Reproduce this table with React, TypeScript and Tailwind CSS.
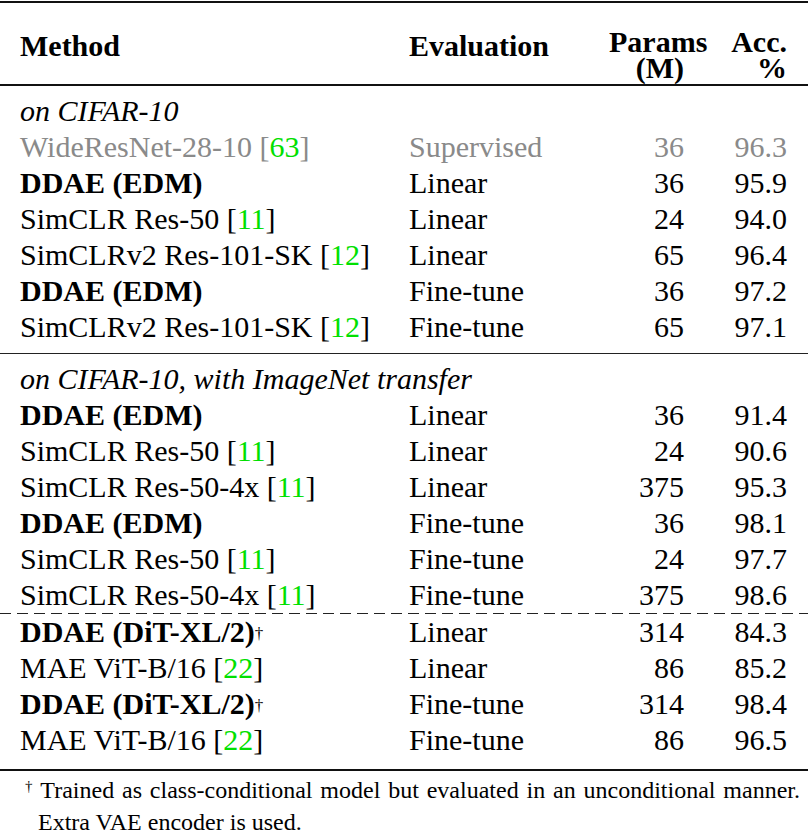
import React from "react";

type Row = {
  method: React.ReactNode;
  evaluation: string;
  params: string;
  acc: string;
  gray?: boolean;
  dashedAbove?: boolean;
};

const Ref = ({ n }: { n: string }) => (
  <>
    [<span className="text-[#00e000]">{n}</span>]
  </>
);

const Bold = ({ children }: { children: React.ReactNode }) => (
  <span className="font-bold">{children}</span>
);

const Dagger = () => (
  <sup className="relative -top-[3px] text-[17px] font-normal leading-none">†</sup>
);

const SECTION_A: Row[] = [
  { method: <>WideResNet-28-10 <Ref n="63" /></>, evaluation: "Supervised", params: "36", acc: "96.3", gray: true },
  { method: <Bold>DDAE (EDM)</Bold>, evaluation: "Linear", params: "36", acc: "95.9" },
  { method: <>SimCLR Res-50 <Ref n="11" /></>, evaluation: "Linear", params: "24", acc: "94.0" },
  { method: <>SimCLRv2 Res-101-SK <Ref n="12" /></>, evaluation: "Linear", params: "65", acc: "96.4" },
  { method: <Bold>DDAE (EDM)</Bold>, evaluation: "Fine-tune", params: "36", acc: "97.2" },
  { method: <>SimCLRv2 Res-101-SK <Ref n="12" /></>, evaluation: "Fine-tune", params: "65", acc: "97.1" },
];

const SECTION_B: Row[] = [
  { method: <Bold>DDAE (EDM)</Bold>, evaluation: "Linear", params: "36", acc: "91.4" },
  { method: <>SimCLR Res-50 <Ref n="11" /></>, evaluation: "Linear", params: "24", acc: "90.6" },
  { method: <>SimCLR Res-50-4x <Ref n="11" /></>, evaluation: "Linear", params: "375", acc: "95.3" },
  { method: <Bold>DDAE (EDM)</Bold>, evaluation: "Fine-tune", params: "36", acc: "98.1" },
  { method: <>SimCLR Res-50 <Ref n="11" /></>, evaluation: "Fine-tune", params: "24", acc: "97.7" },
  { method: <>SimCLR Res-50-4x <Ref n="11" /></>, evaluation: "Fine-tune", params: "375", acc: "98.6" },
  { method: <><Bold>DDAE (DiT-XL/2)</Bold><Dagger /></>, evaluation: "Linear", params: "314", acc: "84.3", dashedAbove: true },
  { method: <>MAE ViT-B/16 <Ref n="22" /></>, evaluation: "Linear", params: "86", acc: "85.2" },
  { method: <><Bold>DDAE (DiT-XL/2)</Bold><Dagger /></>, evaluation: "Fine-tune", params: "314", acc: "98.4" },
  { method: <>MAE ViT-B/16 <Ref n="22" /></>, evaluation: "Fine-tune", params: "86", acc: "96.5" },
];

const COLS = "grid grid-cols-[409px_200px_75px_103px]";

function TableRow({ row }: { row: Row }) {
  return (
    <>
      {row.dashedAbove && (
        <div className="h-px w-full bg-[repeating-linear-gradient(to_right,#222_0_11px,transparent_11px_17px)]" />
      )}
      <div className={`${COLS} h-[36px] items-center ${row.gray ? "text-[#8a8a8a]" : "text-black"}`}>
        <div className="pl-[20px] whitespace-nowrap">{row.method}</div>
        <div>{row.evaluation}</div>
        <div className="text-right">{row.params}</div>
        <div className="text-right">{row.acc}</div>
      </div>
    </>
  );
}

function SectionTitle({ children }: { children: React.ReactNode }) {
  return (
    <div className="h-[36px] flex items-center pl-[20px] italic whitespace-nowrap">{children}</div>
  );
}

export default function App() {
  return (
    <div className="w-[811px] h-[834px] bg-white overflow-hidden [font-family:Liberation_Serif,Times_New_Roman,serif] text-[30px] leading-[36px] text-black">
      <div className="w-[808px] pt-px">
        <div className="h-[2px] bg-[#111]" />

        <div className={`${COLS} h-[81px] font-bold`}>
          <div className="pl-[20px] pt-[25px]">Method</div>
          <div className="pt-[25px]">Evaluation</div>
          <div className="text-right pt-[26px] leading-[26px] whitespace-nowrap">
            Params
            <br />
            (M)
          </div>
          <div className="text-right pt-[26px] leading-[26px]">
            Acc.
            <br />
            %
          </div>
        </div>

        <div className="h-[2px] bg-[#111]" />

        <div className="pt-[7px]">
          <SectionTitle>on CIFAR-10</SectionTitle>
          {SECTION_A.map((r, i) => (
            <TableRow key={i} row={r} />
          ))}
        </div>

        <div className="mt-[8px] h-px bg-[#222]" />

        <div className="pt-[7px]">
          <SectionTitle>on CIFAR-10, with ImageNet transfer</SectionTitle>
          {SECTION_B.map((r, i) => (
            <TableRow key={i} row={r} />
          ))}
        </div>

        <div className="mt-[11px] h-[2px] bg-[#111]" />

        <div className="pt-[3px] pl-[25px] text-[24px] leading-[32px]">
          <div className="w-[775px] whitespace-nowrap [text-align-last:justify]">
            <sup className="text-[15px] pr-[6px]">†</sup>Trained as class-conditional model but evaluated in an unconditional manner.
          </div>
          <div className="pl-[13px]">Extra VAE encoder is used.</div>
        </div>
      </div>
    </div>
  );
}
